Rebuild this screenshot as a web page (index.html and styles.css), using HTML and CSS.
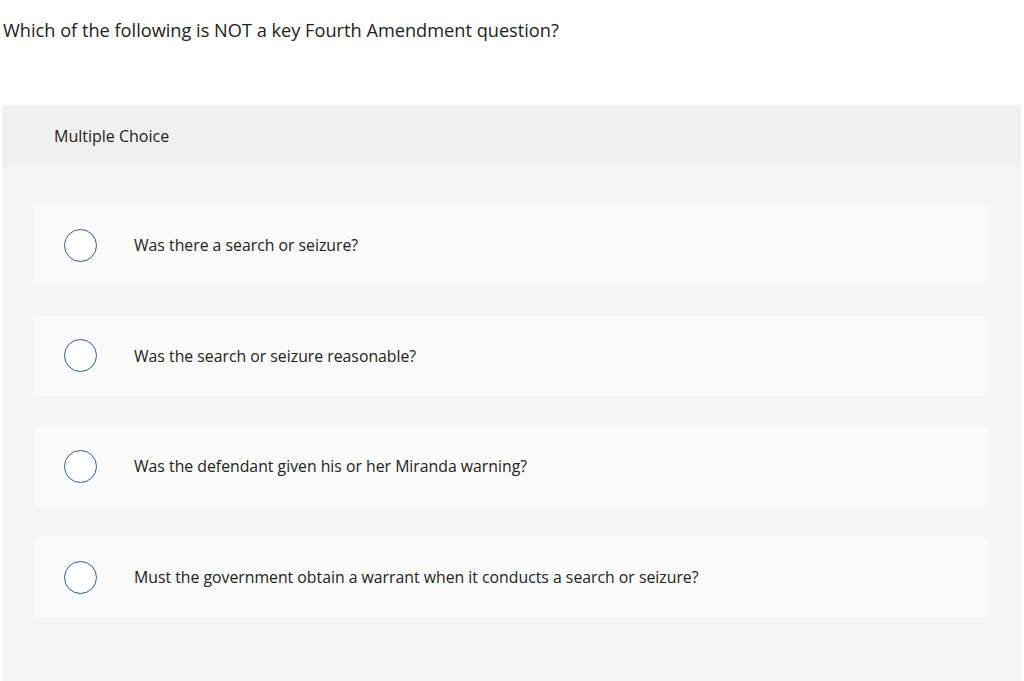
FILE: index.html
```html
<!DOCTYPE html>
<html>
<head>
  <link rel="stylesheet" href="styles.css">
</head>
<body>
  <div class="prompt">Which of the following is NOT a key Fourth Amendment question?</div>
  <div class="panel">
    <div class="panel_head">Multiple Choice</div>
    <div class="panel_body">
      <div class="choice"><span class="radio"></span><span class="choice_text">Was there a search or seizure?</span></div>
      <div class="choice"><span class="radio"></span><span class="choice_text">Was the search or seizure reasonable?</span></div>
      <div class="choice"><span class="radio"></span><span class="choice_text">Was the defendant given his or her Miranda warning?</span></div>
      <div class="choice"><span class="radio"></span><span class="choice_text">Must the government obtain a warrant when it conducts a search or seizure?</span></div>
    </div>
  </div>
</body>
</html>
```

FILE: styles.css
```css
body {
  margin: 0;
  background: #ffffff;
  font-family: "Open Sans", "Lato", sans-serif;
  color: #222222;
}
.prompt {
  padding: 19px 0 0 3px;
  height: 105px;
  box-sizing: border-box;
  font-size: 18.2px;
  line-height: 22px;
}
.panel {
  margin: 0 3px 0 2px;
  background: #f5f5f5;
  height: 576px;
}
.panel_head {
  height: 61px;
  background: #f0f0f0;
  display: flex;
  align-items: center;
  padding-left: 52px;
  font-size: 16px;
}
.panel_body {
  padding: 39px 34px 0 32px;
  display: flex;
  flex-direction: column;
  gap: 30.7px;
}
.choice {
  height: 80px;
  background: #fafafa;
  border-radius: 4px;
  display: flex;
  align-items: center;
  padding-left: 30px;
}
.radio {
  width: 31px;
  height: 31px;
  border: 1.5px solid #2d5a94;
  border-radius: 50%;
  background: #ffffff;
  flex: none;
}
.choice_text {
  margin-left: 37px;
  font-size: 15.8px;
}
```
